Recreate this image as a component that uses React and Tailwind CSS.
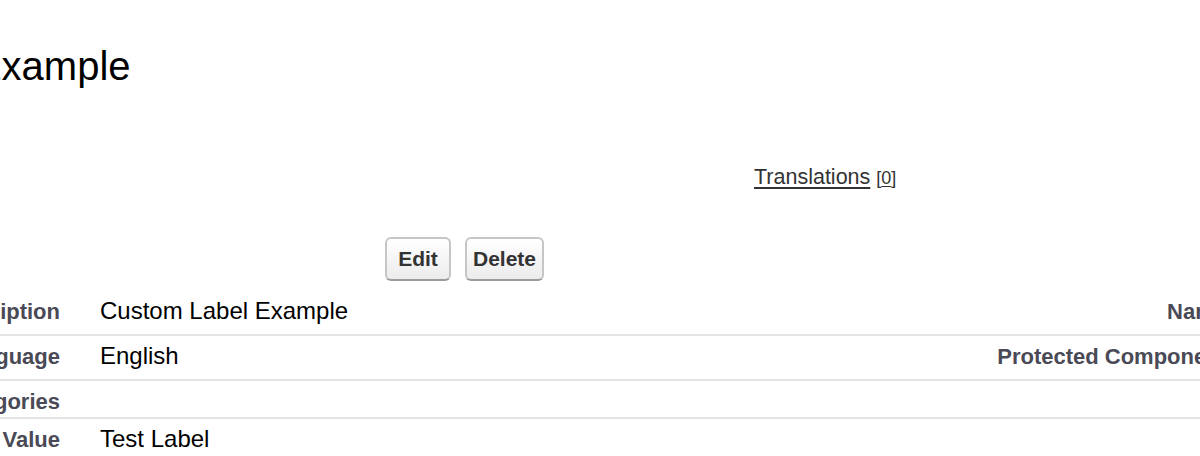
import React from 'react';

const rows = [
    { label: 'Short Description', value: 'Custom Label Example', label2: 'Name', value2: 'Custom_Label_Example' },
    { label: 'Language', value: 'English', label2: 'Protected Component', value2: '' },
    { label: 'Categories', value: '', label2: '', value2: '' },
    { label: 'Value', value: 'Test Label', label2: '', value2: '' },
];

const DetailRow = ({ row }) => {
    return (
        <div className="flex items-start border-b-2 border-[#e4e4e4]">
            <div className="w-[242px] shrink-0 pr-[22px] pt-[10px] pb-[4px] text-right text-[22px] leading-[22px] font-bold text-[#4a4a56]">
                {row.label}
            </div>
            <div className="w-[698px] shrink-0 pl-[18px] pt-[6px] pb-[9px] text-[24px] leading-[28px] text-black">
                {row.value}
            </div>
            <div className="w-[467px] shrink-0 pr-[20px] pt-[10px] pb-[4px] text-right text-[22px] leading-[22px] font-bold text-[#4a4a56]">
                {row.label2}
            </div>
            <div className="w-[400px] shrink-0 pl-[20px] pt-[6px] pb-[9px] text-[24px] leading-[28px] text-black">
                {row.value2}
            </div>
        </div>
    );
};

const App = () => {
    return (
        <div className="w-[1200px] h-[456px] overflow-hidden bg-white font-['Liberation_Sans',Arial,sans-serif]">
            <div className="pt-[44px] ml-[-283px] whitespace-nowrap text-[40px] leading-[44px] text-black">
                Custom Label Example
            </div>

            <div className="mt-[77px] pl-[754px] text-[21.5px] leading-[24px] text-[#333] whitespace-nowrap">
                <span className="underline underline-offset-[3px]">Translations</span>{' '}
                <span className="text-[18px]">[<span className="underline underline-offset-[2px]">0</span>]</span>
            </div>

            <div className="mt-[47px] pl-[385px] flex gap-[14px]">
                <button className="w-[66px] h-[44px] rounded-[6px] border-2 border-[#c6c6c6] border-b-[#9c9c9c] bg-linear-to-b from-white to-[#ececec] text-[21px] font-bold text-[#333]">
                    Edit
                </button>
                <button className="w-[79px] h-[44px] rounded-[6px] border-2 border-[#c6c6c6] border-b-[#9c9c9c] bg-linear-to-b from-white to-[#ececec] text-[21px] font-bold text-[#333]">
                    Delete
                </button>
            </div>

            <div className="mt-[10px] ml-[-160px] w-[1800px]">
                {rows.map((row, index) => (
                    <DetailRow key={index} row={row} />
                ))}
            </div>
        </div>
    );
};

export default App;
